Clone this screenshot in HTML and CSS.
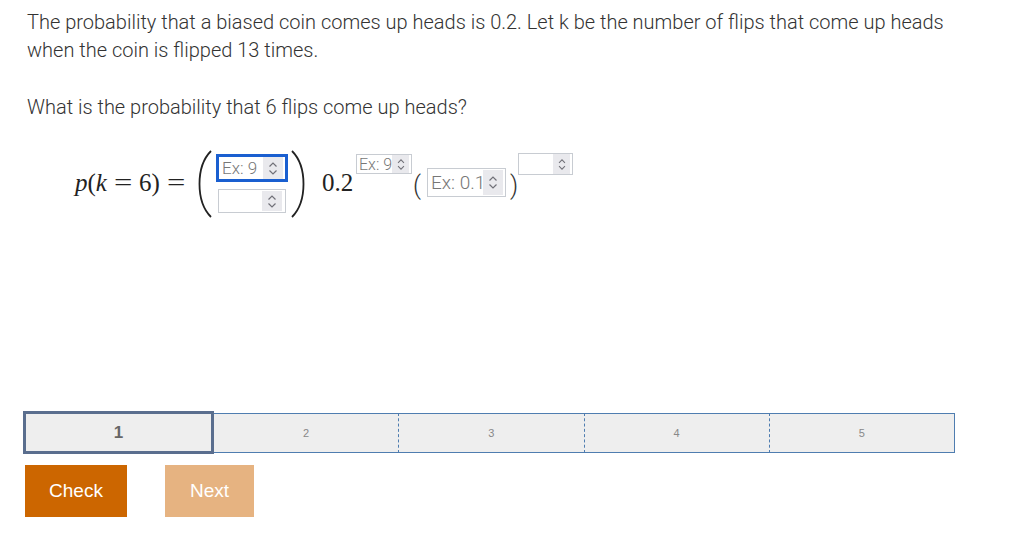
FILE: index.html
```html
<!DOCTYPE html>
<html lang="en">
<head>
  <meta charset="UTF-8">
  <title>Binomial probability</title>
  <link rel="stylesheet" href="styles.css">
</head>
<body>
  <div class="question">
    <p>The probability that a biased coin comes up heads is 0.2. Let k be the number of flips that come up heads when the coin is flipped 13 times.</p>
    <p>What is the probability that 6 flips come up heads?</p>
  </div>

  <div class="math">
    <span class="lhs"><i>p</i>(<i>k</i><span class="rel">=</span>6)<span class="rel">=</span></span>

    <span class="binom">
      <svg class="paren" width="16" height="68" viewBox="0 0 16 68">
        <path d="M14 1 C5 10 2.5 21 2.5 34 C2.5 47 5 58 14 67" fill="none" stroke="#222" stroke-width="1.8"/>
      </svg>
      <span class="stack">
        <span class="field big focused"><input type="text" placeholder="Ex: 9"><span class="spin"></span></span>
        <span class="field big low"><input type="text"><span class="spin"></span></span>
      </span>
      <svg class="paren" width="16" height="68" viewBox="0 0 16 68">
        <path d="M2 1 C11 10 13.5 21 13.5 34 C13.5 47 11 58 2 67" fill="none" stroke="#222" stroke-width="1.8"/>
      </svg>
    </span>

    <span class="num">0.2</span>
    <span class="field small exp1"><input type="text" placeholder="Ex: 9"><span class="spin"></span></span>

    <span class="lp">(</span>
    <span class="field mid"><input type="text" placeholder="Ex: 0.1"><span class="spin"></span></span>
    <span class="rp">)</span>
    <span class="field small exp2"><input type="text"><span class="spin"></span></span>
  </div>

  <div class="progress">
    <div class="step current">1</div>
    <div class="step">2</div>
    <div class="step dashed">3</div>
    <div class="step dashed">4</div>
    <div class="step dashed last">5</div>
  </div>

  <div class="buttons">
    <button class="check">Check</button>
    <button class="next">Next</button>
  </div>

  <script>
    // draw the little up/down arrows in every spinner
    const arrows = '<svg width="10" height="15" viewBox="0 0 10 15"><path d="M1.5 5.5 L5 2 L8.5 5.5 M1.5 9.5 L5 13 L8.5 9.5" fill="none" stroke="#707078" stroke-width="1.2"/></svg>';
    document.querySelectorAll('.spin').forEach(s => s.innerHTML = arrows);
  </script>
</body>
</html>
```

FILE: styles.css
```css
body {
  margin: 0;
  font-family: Roboto, "Noto Sans", sans-serif;
  color: #333;
  background: #fff;
}

.question {
  padding: 8px 50px 0 27px;
}

.question p {
  margin: 0 0 29px;
  font-size: 20px;
  font-weight: 300;
  line-height: 28px;
}

.question p:last-child {
  margin-bottom: 0;
}

.math {
  display: flex;
  align-items: flex-start;
  margin-top: 28px;
  height: 76px;
  font-family: "Liberation Serif", serif;
  color: #222;
}

.lhs {
  flex: 0 0 122px;
  margin: 20px 0 0 75px;
  font-size: 25px;
  line-height: 28px;
  white-space: nowrap;
}

.lhs .rel {
  display: inline-block;
  margin: 0 9px;
  transform: scaleX(1.3);
}

.binom {
  display: flex;
  align-items: flex-start;
  margin-top: 1px;
}

.stack {
  display: flex;
  flex-direction: column;
  gap: 8px;
  margin: 5px 3px 0 4px;
}

.field {
  display: flex;
  align-items: stretch;
  border: 1px solid #c8ccd2;
  background: #fff;
  box-sizing: border-box;
}

.field input {
  border: none;
  outline: none;
  padding: 0 0 0 3px;
  min-width: 0;
  width: 0;
  flex: 1;
  font-family: Roboto, sans-serif;
  font-weight: 300;
  color: #333;
  background: transparent;
}

.field input::placeholder {
  color: #777;
}

.spin {
  display: flex;
  align-items: center;
  justify-content: center;
  flex: 0 0 20px;
  margin: 1px 3px 1px 0;
  background: #e9e9ed;
}

.big {
  width: 70px;
  height: 26px;
}

.big input {
  font-size: 17px;
}

.focused {
  border: 2px solid #1a5fd0;
  box-shadow: 0 0 0 1px #1a5fd0;
}

.focused .spin {
  margin: 0 2px 0 0;
}

.low {
  width: 68px;
  height: 24px;
  margin-left: 1px;
}

.num {
  flex: 0 0 34px;
  margin: 20px 0 0 16px;
  font-size: 25px;
  line-height: 28px;
}

.small {
  width: 56px;
  height: 20px;
}

.small input {
  font-size: 16px;
  padding-left: 2px;
}

.small .spin {
  flex-basis: 17px;
  margin: 0 2px 0 0;
}

.small .spin svg {
  transform: scale(0.85);
}

.exp1 {
  margin-top: 5px;
}

.lp,
.rp {
  font-family: Roboto, sans-serif;
  font-size: 25px;
  font-weight: 300;
  line-height: 30px;
  margin-top: 22px;
  color: #333;
}

.lp {
  flex: 0 0 14px;
  padding-left: 1px;
}

.rp {
  flex: 0 0 12px;
  padding-left: 4px;
  box-sizing: border-box;
}

.mid {
  width: 79px;
  height: 29px;
  margin-top: 19px;
}

.mid input {
  font-size: 19px;
}

.mid .spin {
  flex-basis: 20px;
  margin: 1px 2px 1px 0;
}

.exp2 {
  width: 55px;
  height: 22px;
  margin-top: 4px;
}

.progress {
  display: flex;
  align-items: center;
  margin: 186px 0 0 23px;
  width: 932px;
  height: 43px;
  font-family: "Liberation Sans", Arial, sans-serif;
}

.step {
  flex: 1;
  height: 40px;
  box-sizing: border-box;
  display: flex;
  align-items: center;
  justify-content: center;
  background: #eee;
  border-top: 1px solid #4f7db0;
  border-bottom: 1px solid #4f7db0;
  font-size: 11px;
  color: #888;
}

.step.current {
  flex: 0 0 191px;
  height: 43px;
  border: 3px solid #5a6e8e;
  font-size: 17px;
  font-weight: bold;
  color: #666;
}

.step.dashed {
  border-left: 1px dashed #4f7db0;
}

.step.last {
  border-right: 1px solid #4f7db0;
}

.buttons {
  display: flex;
  gap: 38px;
  margin: 11px 0 0 25px;
}

.buttons button {
  height: 52px;
  border: none;
  color: #fff;
  font-family: "Liberation Sans", Arial, sans-serif;
  font-size: 19px;
  cursor: pointer;
}

.check {
  width: 102px;
  background: #cc6600;
}

.next {
  width: 89px;
  background: #e6b381;
}
```
